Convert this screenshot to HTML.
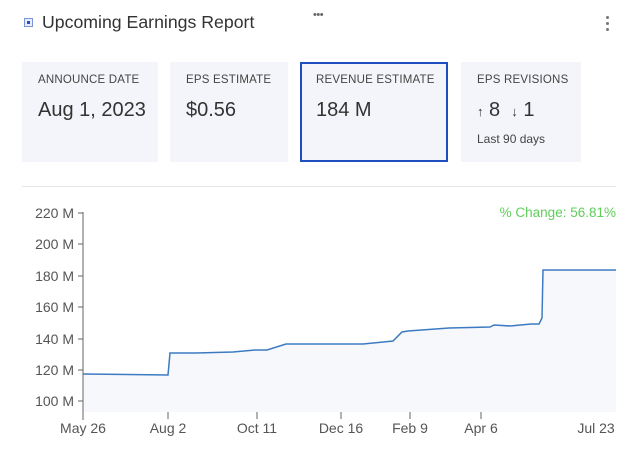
<!DOCTYPE html><html><head><style>
body{margin:0;width:640px;height:460px;background:#fff;font-family:"Liberation Sans",sans-serif;color:#333;position:relative;overflow:hidden}
.a{position:absolute}
.card{position:absolute;top:62px;height:100px;background:#f3f5fa;box-sizing:border-box}
.lb{position:absolute;left:16px;top:12px;font-size:11.5px;color:#444;letter-spacing:.2px}
.vl{position:absolute;left:16px;top:37px;font-size:20px;color:#333}
</style></head><body>
<div class="a" style="left:24px;top:18px;width:7px;height:7px;border:1px solid #7a94d8;background:#e8edf9"><div style="margin:2px;width:3px;height:3px;background:#2a4fb8"></div></div>
<div class="a" style="left:42px;top:12px;font-size:17.7px;color:#333">Upcoming Earnings Report</div>
<div class="a" style="left:313px;top:9px;font-size:11px;color:#666;letter-spacing:-0.5px">•••</div>
<div class="a" style="left:606px;top:16px;width:3px;height:3px;border-radius:2px;background:#777;box-shadow:0 6px #777,0 12px #777"></div>
<div class="card" style="left:22px;width:136px"><div class="lb">ANNOUNCE DATE</div><div class="vl">Aug 1, 2023</div></div>
<div class="card" style="left:170px;width:118px"><div class="lb">EPS ESTIMATE</div><div class="vl">$0.56</div></div>
<div class="card" style="left:300px;width:148px;border:2px solid #1f4fbf"><div class="lb" style="left:14px;top:10px">REVENUE ESTIMATE</div><div class="vl" style="left:14px;top:35px">184 M</div></div>
<div class="card" style="left:461px;width:120px"><div class="lb">EPS REVISIONS</div><div class="vl"><span style="font-size:13px">↑</span> 8&nbsp; <span style="font-size:13px">↓</span> 1</div><div class="a" style="left:16px;top:70px;font-size:12px;color:#444">Last 90 days</div></div>
<div class="a" style="left:22px;top:186px;width:594px;height:1px;background:#e6e6e6"></div>
<svg class="a" style="left:0;top:0" width="640" height="460" font-family="Liberation Sans" font-size="14" fill="#555">
<polygon fill="#f6f8fc" points="83,374 168,375 170,353 196,353 233,352 255,350 267,350 286,344 363,344 393,341 402,332 408,331 449,328 490,327 494,325 510,326 531,324 539,324 542,318 543,270 616,270 616,412 83,412"/>
<polyline fill="none" stroke="#3c7bc2" stroke-width="1.5" points="83,374 168,375 170,353 196,353 233,352 255,350 267,350 286,344 363,344 393,341 402,332 408,331 449,328 490,327 494,325 510,326 531,324 539,324 542,318 543,270 616,270"/>
<g stroke="#666" stroke-width="1"><line x1="83" y1="212" x2="83" y2="420"/>
<line x1="78" y1="213" x2="83" y2="213"/><line x1="78" y1="244" x2="83" y2="244"/><line x1="78" y1="276" x2="83" y2="276"/><line x1="78" y1="307" x2="83" y2="307"/><line x1="78" y1="339" x2="83" y2="339"/><line x1="78" y1="370" x2="83" y2="370"/><line x1="78" y1="401" x2="83" y2="401"/>
<line x1="168" y1="412" x2="168" y2="419"/><line x1="257" y1="412" x2="257" y2="419"/><line x1="341" y1="412" x2="341" y2="419"/><line x1="410" y1="412" x2="410" y2="419"/><line x1="481" y1="412" x2="481" y2="419"/></g>
<g text-anchor="end"><text x="74" y="218">220 M</text><text x="74" y="249">200 M</text><text x="74" y="281">180 M</text><text x="74" y="312">160 M</text><text x="74" y="344">140 M</text><text x="74" y="375">120 M</text><text x="74" y="406">100 M</text></g>
<g text-anchor="middle"><text x="83" y="433">May 26</text><text x="168" y="433">Aug 2</text><text x="257" y="433">Oct 11</text><text x="341" y="433">Dec 16</text><text x="410" y="433">Feb 9</text><text x="481" y="433">Apr 6</text><text x="596" y="433">Jul 23</text></g>
<text x="616" y="217" text-anchor="end" fill="#5fcf5a" font-size="13.5">% Change: 56.81%</text>
</svg>
</body></html>
